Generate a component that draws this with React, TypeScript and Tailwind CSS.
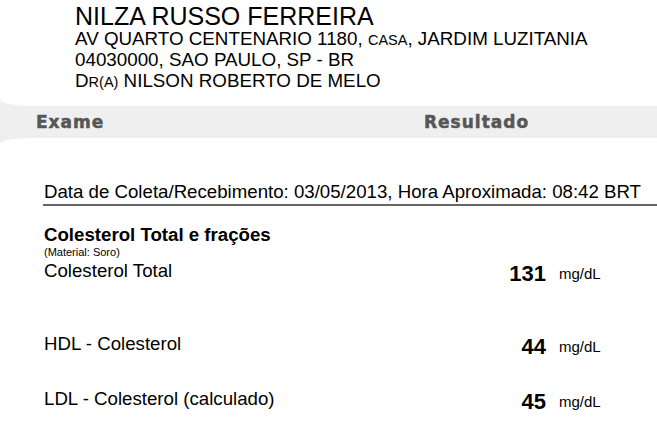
import React from "react";

const rows = [
  { name: "Colesterol Total", value: "131", unit: "mg/dL", mt: "mt-[2px]" },
  { name: "HDL - Colesterol", value: "44", unit: "mg/dL", mt: "mt-[45px]" },
  { name: "LDL - Colesterol (calculado)", value: "45", unit: "mg/dL", mt: "mt-[27px]" },
];

export default function App() {
  return (
    <div className="w-[657px] h-[433px] overflow-hidden bg-white text-black font-['Liberation_Sans',Arial,sans-serif]">
      <div className="pl-[75px] pt-[3px]">
        <div className="text-[25px] leading-[26px]">NILZA RUSSO FERREIRA</div>
        <div className="text-[18.8px] leading-[20.33px]">
          <div>
            AV QUARTO CENTENARIO 1180, <span className="text-[14.5px]">CASA</span>, JARDIM LUZITANIA
          </div>
          <div>04030000, SAO PAULO, SP - BR</div>
          <div>
            D<span className="text-[14.5px]">R(A)</span> NILSON ROBERTO DE MELO
          </div>
        </div>
      </div>

      <div className="relative mt-[14px] h-[32px] pt-[2px] bg-[#efefef] flex items-center font-['DejaVu_Sans',Verdana,sans-serif] font-bold text-[17px] tracking-[1px] text-[#565656] [-webkit-text-stroke:0.5px_#565656]">
        <div className="absolute left-0 top-[-7px] w-[30px] h-[7px] bg-[#efefef]">
          <div className="w-full h-full bg-white rounded-bl-[30px_7px]" />
        </div>
        <div className="absolute left-0 bottom-[-6px] w-[30px] h-[6px] bg-[#efefef]">
          <div className="w-full h-full bg-white rounded-tl-[30px_6px]" />
        </div>
        <span className="pl-[36px] w-[424px]">Exame</span>
        <span>Resultado</span>
      </div>

      <div className="ml-[43px] mt-[43.5px] pl-[1px] pb-[1px] border-b-2 border-[#666] text-[18.67px] leading-[22px]">
        Data de Coleta/Recebimento: 03/05/2013, Hora Aproximada: 08:42 BRT
      </div>

      <div className="pl-[44px]">
        <div className="mt-[18px] text-[18.67px] leading-[22px] font-bold">Colesterol Total e frações</div>
        <div className="text-[11px] leading-[12px]">(Material: Soro)</div>
        {rows.map((r) => (
          <div key={r.name} className={`${r.mt} h-[28px] flex items-start`}>
            <span className="flex-1 text-[18.67px] leading-[22px]">{r.name}</span>
            <span className="text-[22px] leading-[28px] font-bold text-right">{r.value}</span>
            <span className="ml-[13px] w-[98px] text-[15px] leading-[28px]">{r.unit}</span>
          </div>
        ))}
      </div>
    </div>
  );
}
